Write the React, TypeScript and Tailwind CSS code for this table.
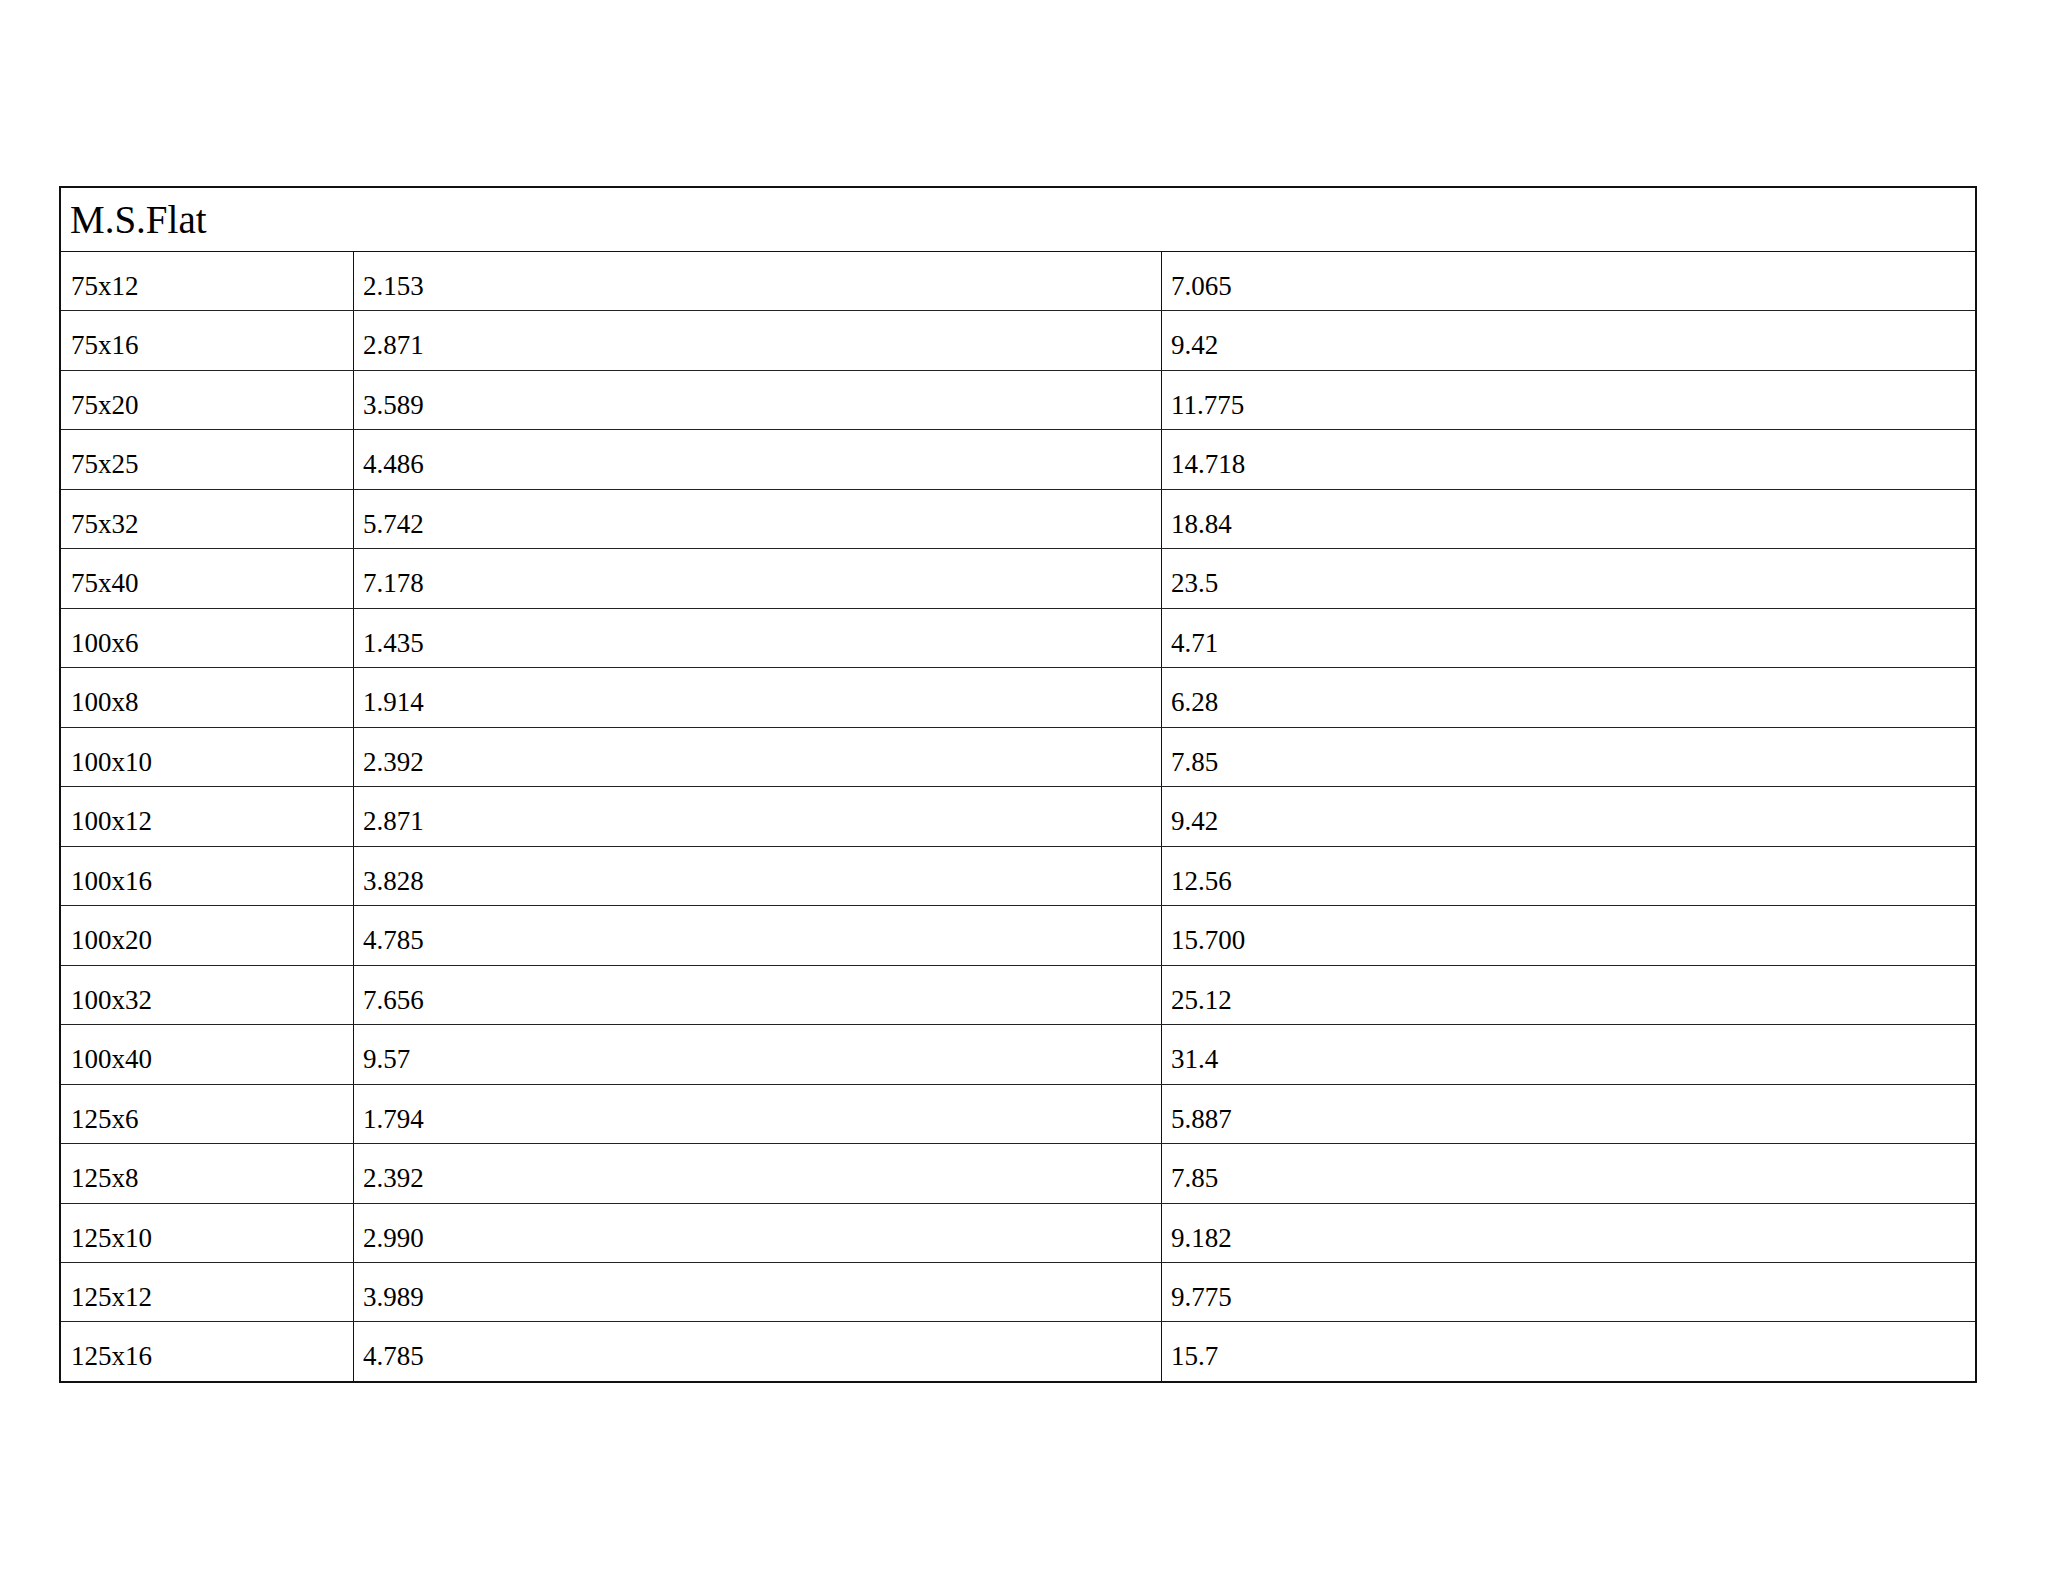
import React from "react";

const rows: [string, string, string][] = [
  ["75x12", "2.153", "7.065"],
  ["75x16", "2.871", "9.42"],
  ["75x20", "3.589", "11.775"],
  ["75x25", "4.486", "14.718"],
  ["75x32", "5.742", "18.84"],
  ["75x40", "7.178", "23.5"],
  ["100x6", "1.435", "4.71"],
  ["100x8", "1.914", "6.28"],
  ["100x10", "2.392", "7.85"],
  ["100x12", "2.871", "9.42"],
  ["100x16", "3.828", "12.56"],
  ["100x20", "4.785", "15.700"],
  ["100x32", "7.656", "25.12"],
  ["100x40", "9.57", "31.4"],
  ["125x6", "1.794", "5.887"],
  ["125x8", "2.392", "7.85"],
  ["125x10", "2.990", "9.182"],
  ["125x12", "3.989", "9.775"],
  ["125x16", "4.785", "15.7"],
];

export default function App() {
  return (
    <div
      className="min-h-[1582px] w-full bg-white text-black"
      style={{ fontFamily: '"Liberation Serif", "Times New Roman", serif' }}
    >
      <div className="pt-[186px] pl-[59px]">
        <div className="w-[1918px] border-2 border-[#111]">
          <div className="h-[64px] border-b border-[#111] pl-[9px] pt-[10px] text-[39px] leading-[44px]">
            M.S.Flat
          </div>
          {rows.map((r, i) => (
            <div
              key={i}
              className={
                i === rows.length - 1
                  ? "flex h-[58.5px] text-[27px] leading-[30px]"
                  : "flex h-[59.47px] border-b border-[#222] text-[27px] leading-[30px]"
              }
            >
              <div className="w-[293px] shrink-0 border-r border-[#111] pl-[10px] pt-[19px]">
                {r[0]}
              </div>
              <div className="w-[808px] shrink-0 border-r border-[#111] pl-[9px] pt-[19px]">
                {r[1]}
              </div>
              <div className="flex-1 pl-[9px] pt-[19px]">{r[2]}</div>
            </div>
          ))}
        </div>
      </div>
    </div>
  );
}
